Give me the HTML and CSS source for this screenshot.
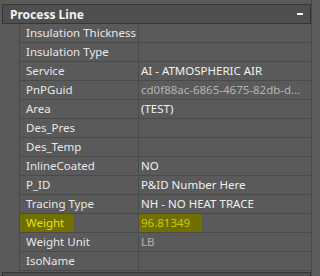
FILE: index.html
```html
<!DOCTYPE html>
<html lang="en">
<head>
    <meta charset="UTF-8">
    <title>Properties</title>
    <link rel="stylesheet" href="styles.css">
</head>
<body>
    <div class="panel">
        <div class="grid">
            <div class="category">
                <span class="category-name">Process Line</span>
                <span class="collapse"></span>
            </div>
            <div class="row"><div class="name">Insulation Thickness</div><div class="value"></div></div>
            <div class="row"><div class="name">Insulation Type</div><div class="value"></div></div>
            <div class="row"><div class="name">Service</div><div class="value">AI - ATMOSPHERIC AIR</div></div>
            <div class="row"><div class="name">PnPGuid</div><div class="value readonly">cd0f88ac-6865-4675-82db-d...</div></div>
            <div class="row"><div class="name">Area</div><div class="value">(TEST)</div></div>
            <div class="row"><div class="name">Des_Pres</div><div class="value"></div></div>
            <div class="row"><div class="name">Des_Temp</div><div class="value"></div></div>
            <div class="row"><div class="name">InlineCoated</div><div class="value">NO</div></div>
            <div class="row"><div class="name">P_ID</div><div class="value">P&amp;ID Number Here</div></div>
            <div class="row"><div class="name">Tracing Type</div><div class="value">NH - NO HEAT TRACE</div></div>
            <div class="row marked">
                <div class="name"><span class="mark mark-name">Weight</span></div>
                <div class="value readonly"><span class="mark mark-value">96.81349</span></div>
            </div>
            <div class="row"><div class="name">Weight Unit</div><div class="value readonly">LB</div></div>
            <div class="row"><div class="name">IsoName</div><div class="value"></div></div>
            <div class="category next"></div>
        </div>
        <div class="side"></div>
    </div>
</body>
</html>
```

FILE: styles.css
```css
body {
    margin: 0;
    padding: 0;
    background: #5a5a5a;
    font-family: "Noto Sans", "Open Sans", sans-serif;
    font-size: 11.5px;
    color: #e8e8e8;
}

.panel {
    display: flex;
    width: 320px;
    height: 276px;
    overflow: hidden;
}

.grid {
    width: 311px;
    border-right: 1px solid #474747;
    padding-top: 4px;
}

.side {
    flex: 1;
    background: #5c5c5c;
}

.category {
    display: flex;
    align-items: center;
    justify-content: space-between;
    height: 18px;
    margin-left: 2px;
    padding: 0 7px 0 7px;
    background: #4f4f4f;
    border: 1px solid #363636;
}

.category-name {
    font-weight: bold;
    color: #f2f2f2;
    font-size: 12px;
}

.collapse {
    width: 6px;
    height: 2px;
    background: #f4f4f4;
    margin-right: 0;
}

.category.next {
    margin-top: 1px;
}

.row {
    display: flex;
    height: 18px;
    margin-left: 19px;
    border-bottom: 1px solid #4a4a4a;
    border-left: 1px solid #4a4a4a;
}

.name {
    width: 119px;
    padding-left: 6px;
    box-sizing: border-box;
    border-right: 1px solid #4a4a4a;
    line-height: 18px;
    white-space: nowrap;
    overflow: hidden;
}

.value {
    flex: 1;
    padding-left: 2px;
    line-height: 18px;
    white-space: nowrap;
    overflow: hidden;
    color: #f0f0f0;
}

.value.readonly {
    color: #b4b4b4;
}

.mark {
    background: #706f00;
    color: #e6e600;
    border-radius: 3px;
}

.mark-name {
    margin-left: -10px;
    padding: 2px 10px 2px 10px;
}

.mark-value {
    margin-left: -8px;
    padding: 2px 12px 2px 8px;
    color: #c9c914;
}
```
